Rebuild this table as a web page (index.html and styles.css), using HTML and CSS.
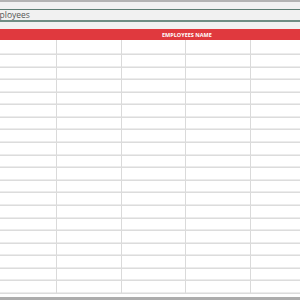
FILE: index.html
```html
<!DOCTYPE html>
<html>
<head>
<meta charset="utf-8">
<link rel="stylesheet" href="styles.css">
</head>
<body>
<div class="page">
  <div class="topbar"></div>
  <div class="titlearea">
    <div class="titlebox"><span class="title">Employees</span></div>
  </div>
  <div class="redbar"><span class="redtext">EMPLOYEES NAME</span></div>
  <div class="grid">
    <div class="row first"><div class="cell"></div><div class="cell"></div><div class="cell"></div><div class="cell"></div><div class="cell"></div></div>
    <div class="row"><div class="cell"></div><div class="cell"></div><div class="cell"></div><div class="cell"></div><div class="cell"></div></div>
    <div class="row"><div class="cell"></div><div class="cell"></div><div class="cell"></div><div class="cell"></div><div class="cell"></div></div>
    <div class="row"><div class="cell"></div><div class="cell"></div><div class="cell"></div><div class="cell"></div><div class="cell"></div></div>
    <div class="row"><div class="cell"></div><div class="cell"></div><div class="cell"></div><div class="cell"></div><div class="cell"></div></div>
    <div class="row"><div class="cell"></div><div class="cell"></div><div class="cell"></div><div class="cell"></div><div class="cell"></div></div>
    <div class="row"><div class="cell"></div><div class="cell"></div><div class="cell"></div><div class="cell"></div><div class="cell"></div></div>
    <div class="row"><div class="cell"></div><div class="cell"></div><div class="cell"></div><div class="cell"></div><div class="cell"></div></div>
    <div class="row"><div class="cell"></div><div class="cell"></div><div class="cell"></div><div class="cell"></div><div class="cell"></div></div>
    <div class="row"><div class="cell"></div><div class="cell"></div><div class="cell"></div><div class="cell"></div><div class="cell"></div></div>
    <div class="row"><div class="cell"></div><div class="cell"></div><div class="cell"></div><div class="cell"></div><div class="cell"></div></div>
    <div class="row"><div class="cell"></div><div class="cell"></div><div class="cell"></div><div class="cell"></div><div class="cell"></div></div>
    <div class="row"><div class="cell"></div><div class="cell"></div><div class="cell"></div><div class="cell"></div><div class="cell"></div></div>
    <div class="row"><div class="cell"></div><div class="cell"></div><div class="cell"></div><div class="cell"></div><div class="cell"></div></div>
    <div class="row"><div class="cell"></div><div class="cell"></div><div class="cell"></div><div class="cell"></div><div class="cell"></div></div>
    <div class="row"><div class="cell"></div><div class="cell"></div><div class="cell"></div><div class="cell"></div><div class="cell"></div></div>
    <div class="row"><div class="cell"></div><div class="cell"></div><div class="cell"></div><div class="cell"></div><div class="cell"></div></div>
    <div class="row"><div class="cell"></div><div class="cell"></div><div class="cell"></div><div class="cell"></div><div class="cell"></div></div>
    <div class="row"><div class="cell"></div><div class="cell"></div><div class="cell"></div><div class="cell"></div><div class="cell"></div></div>
    <div class="row"><div class="cell"></div><div class="cell"></div><div class="cell"></div><div class="cell"></div><div class="cell"></div></div>
  </div>
  <div class="filler"></div>
  <div class="bottombar"></div>
</div>
</body>
</html>
```

FILE: styles.css
```css
html, body {
  margin: 0;
  padding: 0;
  background: #ffffff;
}
.page {
  width: 300px;
  height: 300px;
  overflow: hidden;
  display: flex;
  flex-direction: column;
  font-family: "Liberation Sans", Arial, sans-serif;
}
.topbar {
  height: 2px;
  background: #b3b3b3;
  flex: none;
}
.titlearea {
  flex: none;
  background: #f1f1f1;
  padding: 7px 0 7px 0;
}
.titlebox {
  border-top: 1px solid #5d7d73;
  border-bottom: 2px solid #6f8d84;
  height: 10px;
  overflow: hidden;
  display: flex;
  align-items: center;
}
.title {
  font-family: "Open Sans", "Liberation Sans", sans-serif;
  font-size: 8.5px;
  color: #555;
  margin-left: -13px;
  line-height: 10px;
}
.redbar {
  flex: none;
  height: 11px;
  background: #e0393e;
  display: flex;
  align-items: center;
  padding-left: 162px;
  box-sizing: border-box;
}
.redtext {
  color: #ffffff;
  font-family: "Open Sans", "Liberation Sans", sans-serif;
  font-weight: bold;
  font-size: 5.5px;
  white-space: nowrap;
}
.grid {
  flex: none;
  display: flex;
  flex-direction: column;
}
.row {
  display: grid;
  grid-template-columns: 57px 65px 64px 65px 65px;
  height: 12.58px;
  box-sizing: border-box;
  border-bottom: 1px solid #dcdcdc;
  box-shadow: inset 0 -1px 0 #ececec;
}
.row.first {
  height: 15px;
}
.cell {
  border-right: 1px solid #dadada;
}
.filler {
  flex: 1;
  background: #ffffff;
}
.bottombar {
  flex: none;
  height: 3px;
  background: #adadad;
}
```
